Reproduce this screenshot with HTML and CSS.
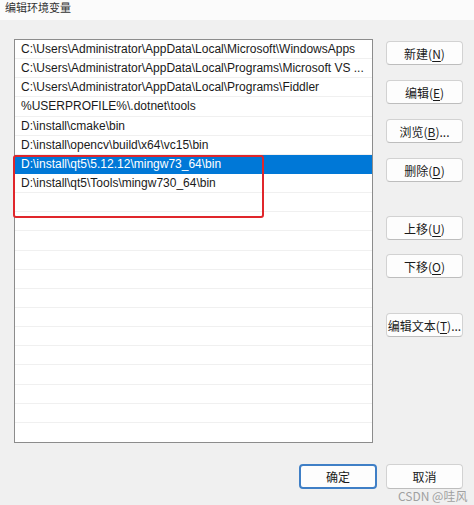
FILE: index.html
```html
<!DOCTYPE html>
<html lang="zh-CN">
<head>
  <meta charset="UTF-8" />
  <title>编辑环境变量</title>
  <link rel="stylesheet" href="styles.css">
</head>
<body>

  <!-- Window title -->
  <div class="title-bar"><span class="title">编辑环境变量</span></div>

  <div class="dialog">
    <div class="main">
      <ul class="path-list">
        <li>C:\Users\Administrator\AppData\Local\Microsoft\WindowsApps</li>
        <li>C:\Users\Administrator\AppData\Local\Programs\Microsoft VS ...</li>
        <li>C:\Users\Administrator\AppData\Local\Programs\Fiddler</li>
        <li>%USERPROFILE%\.dotnet\tools</li>
        <li>D:\install\cmake\bin</li>
        <li>D:\install\opencv\build\x64\vc15\bin</li>
        <li class="selected">D:\install\qt5\5.12.12\mingw73_64\bin</li>
        <li>D:\install\qt5\Tools\mingw730_64\bin</li>
        <li></li>
        <li></li>
        <li></li>
        <li></li>
        <li></li>
        <li></li>
        <li></li>
        <li></li>
        <li></li>
        <li></li>
        <li></li>
        <li></li>
        <li></li>
      </ul>

      <div class="actions">
        <button class="btn">新建(<u>N</u>)</button>
        <button class="btn">编辑(<u>E</u>)</button>
        <button class="btn">浏览(<u>B</u>)...</button>
        <button class="btn">删除(<u>D</u>)</button>
        <button class="btn move-up">上移(<u>U</u>)</button>
        <button class="btn move-down">下移(<u>O</u>)</button>
        <button class="btn edit-text">编辑文本(<u>T</u>)...</button>
      </div>
    </div>

    <div class="footer">
      <button class="btn btn-default">确定</button>
      <button class="btn">取消</button>
    </div>

    <!-- Red marker drawn over the list -->
    <div class="highlight"></div>
    <div class="watermark">CSDN @哇风</div>
  </div>

</body>
</html>
```

FILE: styles.css
```css
body {
  margin: 0;
  width: 474px;
  height: 505px;
  overflow: hidden;
  background-color: #f0f0f0;
  font-family: "Liberation Sans", "Noto Sans CJK SC", sans-serif;
  font-size: 12px;
  color: #1a1a1a;
}

.title-bar {
  height: 20px;
  background-color: #fbfbfb;
  padding-left: 5px;
}

.title {
  display: block;
  font-family: "Noto Sans CJK SC", sans-serif;
  font-size: 11px;
  line-height: 14px;
  color: #333;
}

.dialog {
  position: relative;
  height: 485px;
  padding: 19px 11px 0 14px;
  box-sizing: border-box;
}

.main {
  display: flex;
  gap: 13px;
}

/* Path list */
.path-list {
  list-style: none;
  margin: 0;
  padding: 0;
  width: 357px;
  background-color: #fff;
  border: 1px solid #8c8c8c;
}

.path-list li {
  height: 19.15px;
  line-height: 18px;
  padding-left: 6px;
  border-bottom: 1px solid #f0f0f0;
  box-sizing: border-box;
  white-space: nowrap;
  overflow: hidden;
}

.path-list li:last-child {
  border-bottom: none;
}

.path-list li.selected {
  background-color: #0078d7;
  color: #fff;
  border-bottom-color: #0078d7;
}

/* Buttons */
.actions {
  display: flex;
  flex-direction: column;
  gap: 15px;
  padding-top: 2px;
}

.btn {
  width: 77px;
  height: 24px;
  padding: 0;
  background-color: #fdfdfd;
  border: 1px solid #d2d2d2;
  border-bottom-color: #bdbdbd;
  border-radius: 4px;
  font-family: "Noto Sans CJK SC", sans-serif;
  font-size: 12px;
  color: #1a1a1a;
}

.btn u {
  text-underline-offset: 2px;
}

.move-up {
  margin-top: 19px;
}

.move-down {
  margin-top: -1px;
}

.edit-text {
  margin-top: 20px;
}

.footer {
  display: flex;
  justify-content: flex-end;
  gap: 9px;
  margin-top: 21px;
}

.footer .btn {
  height: 25px;
}

.btn-default {
  width: 78px;
  border: 2px solid #3f7fc6;
}

.highlight {
  position: absolute;
  left: 13px;
  top: 135px;
  width: 251px;
  height: 63px;
  box-sizing: border-box;
  border: 2px solid #e0262b;
  border-radius: 3px;
}

.watermark {
  position: absolute;
  left: 398px;
  top: 467px;
  font-family: "Noto Sans CJK SC", sans-serif;
  font-size: 12px;
  color: #a0a0a0;
}
```
